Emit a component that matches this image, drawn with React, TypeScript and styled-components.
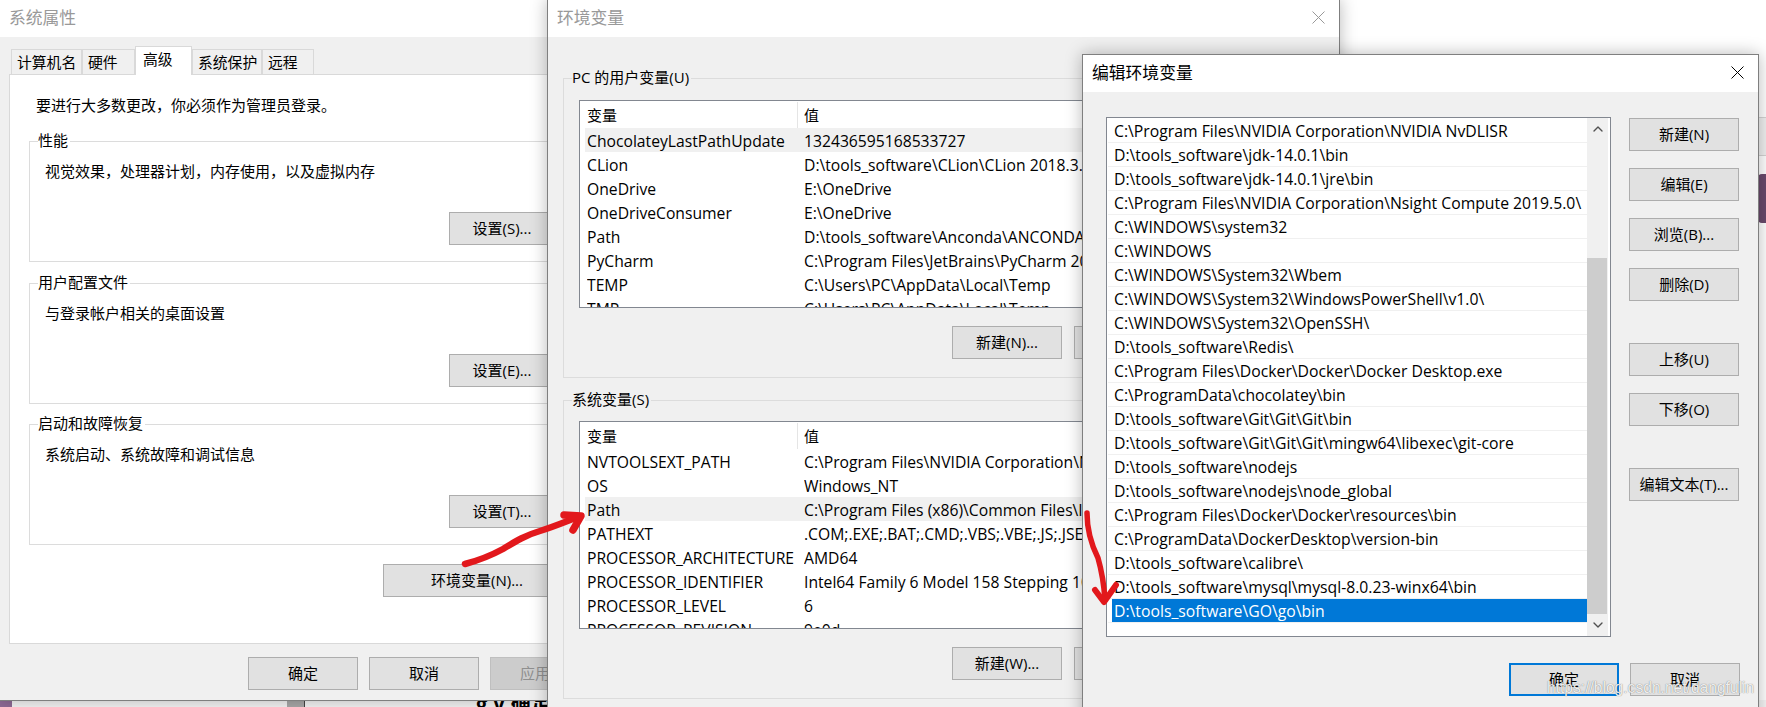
import React from "react";
import styled, { createGlobalStyle } from "styled-components";
import { ChevronDown, ChevronUp } from "lucide-react";

const GlobalStyle = createGlobalStyle`
  html, body {
    margin: 0;
    padding: 0;
    background: #fff;
  }
  * {
    box-sizing: border-box;
  }
`;

const Desktop = styled.div`
  position: relative;
  width: 1766px;
  height: 707px;
  overflow: hidden;
  background: #fff;
  color: #000;
  font-family: "Open Sans", "Noto Sans CJK SC", sans-serif;
  font-size: 15px;
  line-height: 20px;
`;

const Backdrop = styled.div`
  height: 100%;
  display: grid;
  grid-template-rows: 117px 39px 18px 49px 1fr 7px;
`;

const BackdropBand = styled.div`
  background: #f0f0f0;
  border-top: 1px solid #d4d4d4;
  border-bottom: 1px solid #d4d4d4;
`;

const BackdropTab = styled.div`
  grid-row: 4;
  justify-self: end;
  width: 8px;
  background: #694a6c;
  border-radius: 4px 0 0 4px;
`;

const BackdropFooter = styled.div`
  grid-row: 6;
  display: flex;
  overflow: hidden;
  background: #f6f6f6;
`;

const FooterLogo = styled.div`
  width: 12px;
  background: #8f6a96;
`;

const FooterThumb = styled.div`
  width: 17px;
  margin-left: 275px;
  background: #a9a9a9;
  border-right: 1px solid #444;
  box-sizing: content-box;
`;

const FooterText = styled.div`
  margin: -8px 0 0 171px;
  font-size: 20px;
  font-weight: 700;
  line-height: 24px;
  white-space: nowrap;
`;

const Window = styled.section<{ $left: number; $top: number; $width: number; $height: number }>`
  position: absolute;
  left: ${({ $left }) => $left}px;
  top: ${({ $top }) => $top}px;
  width: ${({ $width }) => $width}px;
  height: ${({ $height }) => $height}px;
  overflow: hidden;
  background: #f0f0f0;
  border: 1px solid #7f7f7f;
  box-shadow: 0 0 16px rgba(0, 0, 0, 0.28);
`;

const RootWindow = styled(Window)`
  border-width: 0 0 1px;
`;

const TitleBar = styled.header<{ $active?: boolean }>`
  display: flex;
  align-items: center;
  justify-content: space-between;
  height: 37px;
  padding: 0 14px 2px 9px;
  background: #fff;
  color: ${({ $active }) => ($active ? "#000" : "#999")};
  font-size: 16.8px;
`;

const CloseIcon = styled.svg`
  display: block;
  width: 13px;
  height: 13px;
`;

const TabStrip = styled.div`
  display: flex;
  align-items: flex-end;
  height: 37px;
  padding-left: 11px;
`;

const Tab = styled.div<{ $width: number; $active?: boolean }>`
  position: relative;
  z-index: ${({ $active }) => ($active ? 1 : 0)};
  width: ${({ $width }) => $width}px;
  height: ${({ $active }) => ($active ? 29 : 26)}px;
  margin-bottom: -1px;
  padding: ${({ $active }) => ($active ? "2px 0 0 7px" : "2px 0 0 5px")};
  background: ${({ $active }) => ($active ? "#fff" : "#f0f0f0")};
  border: 1px solid #d9d9d9;
  border-bottom-width: ${({ $active }) => ($active ? 0 : 1)}px;
  font-size: 14.8px;
`;

const TabPanel = styled.div`
  height: 570px;
  margin-left: 9px;
  padding: 20px 0 0 19px;
  background: #fff;
  border: 1px solid #d9d9d9;
`;

const Intro = styled.p`
  margin: 0 0 26px 7px;
`;

const Group = styled.div<{ $gap?: number }>`
  margin-top: ${({ $gap }) => $gap ?? 0}px;
  border: 1px solid #dcdcdc;
`;

const SettingsGroup = styled(Group)`
  width: 547px;
  padding: 0 20px 16px 15px;
`;

const Legend = styled.div<{ $bg: string }>`
  width: fit-content;
  height: 20px;
  margin: -11px 0 0 -7px;
  padding: 0 2px 0 0;
  background: ${({ $bg }) => $bg};
  line-height: 18px;
`;

const Description = styled.p`
  margin: 10px 0 31px;
`;

const ActionRow = styled.div<{ $top?: number }>`
  display: flex;
  justify-content: flex-end;
  margin-top: ${({ $top }) => $top ?? 0}px;
`;

const EnvActionRow = styled(ActionRow)`
  width: 542px;
`;

const Button = styled.button<{ $width?: number; $top?: number; $disabled?: boolean; $primary?: boolean }>`
  flex: none;
  width: ${({ $width }) => $width ?? 110}px;
  height: 33px;
  margin: ${({ $top }) => $top ?? 0}px 0 0;
  padding: 0 0 2px;
  background: ${({ $disabled }) => ($disabled ? "#cccccc" : "#e1e1e1")};
  border: ${({ $primary }) => ($primary ? "2px solid #0078d7" : "1px solid #adadad")};
  border-color: ${({ $disabled, $primary }) => ($primary ? "#0078d7" : $disabled ? "#bfbfbf" : "#adadad")};
  border-radius: 0;
  color: ${({ $disabled }) => ($disabled ? "#8f8f8f" : "#000")};
  font: inherit;
  text-align: center;
`;

const DialogFooter = styled.div`
  display: flex;
  gap: 11px;
  margin: 13px 0 0 248px;
`;

const EnvBody = styled.div`
  padding: 41px 0 0 15px;
`;

const EnvGroup = styled(Group)`
  width: 757px;
  padding: 0 15px 18px 15px;
`;

const VariableList = styled.div<{ $top: number }>`
  height: 208px;
  margin-top: ${({ $top }) => $top}px;
  overflow: hidden;
  background: #fff;
  border: 1px solid #828790;
  font-size: 15.7px;
`;

const VariableRow = styled.div<{ $selected?: boolean; $header?: boolean }>`
  display: grid;
  grid-template-columns: 217px 1fr;
  height: ${({ $header }) => ($header ? 27 : 24)}px;
  margin-left: 5px;
  padding: ${({ $header }) => ($header ? "0" : "2px")} 0 0 2px;
  align-items: center;
  background: ${({ $selected }) => ($selected ? "#f0f0f0" : "transparent")};
  white-space: nowrap;
`;

const HeaderCell = styled.div`
  position: relative;
  height: 100%;
  display: flex;
  align-items: center;
  font-size: 15px;
  & + &::before {
    content: "";
    position: absolute;
    left: -7px;
    top: 1px;
    bottom: 0;
    width: 1px;
    background: #e5e5e5;
  }
`;

const Cell = styled.div`
  overflow: hidden;
`;

const EnvActions = styled(ActionRow)`
  gap: 12px;
  justify-content: flex-start;
  margin: 18px 0 0 373px;
`;

const EditorBody = styled.div`
  display: flex;
  gap: 18px;
  padding: 25px 18px 0 23px;
`;

const PathList = styled.div`
  display: flex;
  width: 505px;
  height: 520px;
  flex: none;
  background: #fff;
  border: 1px solid #828790;
  font-size: 15.75px;
`;

const PathRows = styled.div`
  width: 480px;
  padding: 1px 0 0 1px;
  flex: none;
`;

const PathRow = styled.div`
  height: 24px;
  padding-left: 4px;
  border-bottom: 1px solid #f0f0f0;
  white-space: nowrap;
`;

const PathText = styled.div<{ $selected?: boolean }>`
  height: 23px;
  padding-left: 2px;
  line-height: 24px;
  background: ${({ $selected }) => ($selected ? "#0078d7" : "transparent")};
  color: ${({ $selected }) => ($selected ? "#fff" : "#000")};
`;

const ScrollBar = styled.div`
  display: flex;
  flex-direction: column;
  width: 21px;
  background: #f0f0f0;
`;

const ScrollArrow = styled.div`
  display: flex;
  align-items: center;
  justify-content: center;
  height: 22px;
  color: #505050;
`;

const ScrollTrack = styled.div`
  flex: none;
  height: 118px;
`;

const ScrollThumb = styled.div`
  height: 357px;
  width: 20px;
  background: #cdcdcd;
`;

const ButtonColumn = styled.div`
  display: flex;
  flex-direction: column;
  padding-top: 1px;
`;

const EditorFooter = styled.div`
  display: flex;
  justify-content: flex-end;
  gap: 11px;
  padding: 26px 18px 0 0;
`;

const Annotations = styled.svg`
  position: absolute;
  inset: 0;
  pointer-events: none;
`;

const Watermark = styled.div`
  position: absolute;
  left: 1547px;
  top: 678px;
  color: rgba(255, 255, 255, 0.9);
  font-family: "Liberation Sans", sans-serif;
  font-size: 15.6px;
  text-shadow: 0 0 1px rgba(60, 60, 60, 0.8);
  white-space: nowrap;
`;

const userVariables: [string, string][] = [
  ["ChocolateyLastPathUpdate", "132436595168533727"],
  ["CLion", "D:\\tools_software\\CLion\\CLion 2018.3.4\\bin;"],
  ["OneDrive", "E:\\OneDrive"],
  ["OneDriveConsumer", "E:\\OneDrive"],
  ["Path", "D:\\tools_software\\Anconda\\ANCONDA;D:\\tools_software"],
  ["PyCharm", "C:\\Program Files\\JetBrains\\PyCharm 2019.3\\bin;"],
  ["TEMP", "C:\\Users\\PC\\AppData\\Local\\Temp"],
  ["TMP", "C:\\Users\\PC\\AppData\\Local\\Temp"],
];

const systemVariables: [string, string][] = [
  ["NVTOOLSEXT_PATH", "C:\\Program Files\\NVIDIA Corporation\\NVIDIA"],
  ["OS", "Windows_NT"],
  ["Path", "C:\\Program Files (x86)\\Common Files\\Intel\\Shared"],
  ["PATHEXT", ".COM;.EXE;.BAT;.CMD;.VBS;.VBE;.JS;.JSE;.WSF;.WSH"],
  ["PROCESSOR_ARCHITECTURE", "AMD64"],
  ["PROCESSOR_IDENTIFIER", "Intel64 Family 6 Model 158 Stepping 10, GenuineIntel"],
  ["PROCESSOR_LEVEL", "6"],
  ["PROCESSOR_REVISION", "9e0d"],
];

const paths = [
  "C:\\Program Files\\NVIDIA Corporation\\NVIDIA NvDLISR",
  "D:\\tools_software\\jdk-14.0.1\\bin",
  "D:\\tools_software\\jdk-14.0.1\\jre\\bin",
  "C:\\Program Files\\NVIDIA Corporation\\Nsight Compute 2019.5.0\\",
  "C:\\WINDOWS\\system32",
  "C:\\WINDOWS",
  "C:\\WINDOWS\\System32\\Wbem",
  "C:\\WINDOWS\\System32\\WindowsPowerShell\\v1.0\\",
  "C:\\WINDOWS\\System32\\OpenSSH\\",
  "D:\\tools_software\\Redis\\",
  "C:\\Program Files\\Docker\\Docker\\Docker Desktop.exe",
  "C:\\ProgramData\\chocolatey\\bin",
  "D:\\tools_software\\Git\\Git\\Git\\bin",
  "D:\\tools_software\\Git\\Git\\Git\\mingw64\\libexec\\git-core",
  "D:\\tools_software\\nodejs",
  "D:\\tools_software\\nodejs\\node_global",
  "C:\\Program Files\\Docker\\Docker\\resources\\bin",
  "C:\\ProgramData\\DockerDesktop\\version-bin",
  "D:\\tools_software\\calibre\\",
  "D:\\tools_software\\mysql\\mysql-8.0.23-winx64\\bin",
  "D:\\tools_software\\GO\\go\\bin",
];

const settings = [
  { title: "性能", text: "视觉效果，处理器计划，内存使用，以及虚拟内存", action: "设置(S)...", gap: 0 },
  { title: "用户配置文件", text: "与登录帐户相关的桌面设置", action: "设置(E)...", gap: 21 },
  { title: "启动和故障恢复", text: "系统启动、系统故障和调试信息", action: "设置(T)...", gap: 20 },
];

const tabs = [
  { label: "计算机名", width: 71 },
  { label: "硬件", width: 53 },
  { label: "高级", width: 57, active: true },
  { label: "系统保护", width: 70 },
  { label: "远程", width: 52 },
];

const Close: React.FC<{ color: string }> = ({ color }) => (
  <CloseIcon viewBox="0 0 13 13">
    <path d="M0.5 0.5 12.5 12.5M12.5 0.5 0.5 12.5" stroke={color} strokeWidth="1" fill="none" />
  </CloseIcon>
);

const VariableTable: React.FC<{ rows: [string, string][]; selected: number; top: number }> = ({ rows, selected, top }) => (
  <VariableList $top={top}>
    <VariableRow $header>
      <HeaderCell>变量</HeaderCell>
      <HeaderCell>值</HeaderCell>
    </VariableRow>
    {rows.map(([name, value], index) => (
      <VariableRow key={name} $selected={index === selected}>
        <Cell>{name}</Cell>
        <Cell>{value}</Cell>
      </VariableRow>
    ))}
  </VariableList>
);

const App: React.FC = () => {
  return (
    <Desktop>
      <GlobalStyle />
      <Backdrop>
        <div />
        <BackdropBand />
        <div />
        <BackdropTab />
        <div />
        <BackdropFooter>
          <FooterLogo />
          <FooterThumb />
          <FooterText>g V 确定系</FooterText>
        </BackdropFooter>
      </Backdrop>

      <RootWindow $left={0} $top={0} $width={600} $height={701}>
        <TitleBar>系统属性</TitleBar>
        <TabStrip>
          {tabs.map((tab) => (
            <Tab key={tab.label} $width={tab.width} $active={tab.active}>
              {tab.label}
            </Tab>
          ))}
        </TabStrip>
        <TabPanel>
          <Intro>要进行大多数更改，你必须作为管理员登录。</Intro>
          {settings.map((item) => (
            <SettingsGroup key={item.title} $gap={item.gap}>
              <Legend $bg="#fff">{item.title}</Legend>
              <Description>{item.text}</Description>
              <ActionRow>
                <Button $width={106}>{item.action}</Button>
              </ActionRow>
            </SettingsGroup>
          ))}
          <EnvActionRow $top={19}>
            <Button $width={188}>环境变量(N)...</Button>
          </EnvActionRow>
        </TabPanel>
        <DialogFooter>
          <Button>确定</Button>
          <Button>取消</Button>
          <Button $disabled $width={90}>应用</Button>
        </DialogFooter>
      </RootWindow>

      <Window $left={547} $top={-1} $width={793} $height={720}>
        <TitleBar>
          环境变量
          <Close color="#999" />
        </TitleBar>
        <EnvBody>
          <EnvGroup>
            <Legend $bg="#f0f0f0">PC 的用户变量(U)</Legend>
            <VariableTable rows={userVariables} selected={0} top={12} />
            <EnvActions>
              <Button>新建(N)...</Button>
              <Button>编辑(E)...</Button>
            </EnvActions>
          </EnvGroup>
          <EnvGroup $gap={22}>
            <Legend $bg="#f0f0f0">系统变量(S)</Legend>
            <VariableTable rows={systemVariables} selected={2} top={11} />
            <EnvActions>
              <Button>新建(W)...</Button>
              <Button>编辑(I)...</Button>
            </EnvActions>
          </EnvGroup>
        </EnvBody>
      </Window>

      <Window $left={1082} $top={54} $width={677} $height={680}>
        <TitleBar $active>
          编辑环境变量
          <Close color="#000" />
        </TitleBar>
        <EditorBody>
          <PathList>
            <PathRows>
              {paths.map((path, index) => (
                <PathRow key={path}>
                  <PathText $selected={index === paths.length - 1}>{path}</PathText>
                </PathRow>
              ))}
            </PathRows>
            <ScrollBar>
              <ScrollArrow>
                <ChevronUp size={16} strokeWidth={2} />
              </ScrollArrow>
              <ScrollTrack />
              <ScrollThumb />
              <ScrollArrow>
                <ChevronDown size={16} strokeWidth={2} />
              </ScrollArrow>
            </ScrollBar>
          </PathList>
          <ButtonColumn>
            <Button>新建(N)</Button>
            <Button $top={17}>编辑(E)</Button>
            <Button $top={17}>浏览(B)...</Button>
            <Button $top={17}>删除(D)</Button>
            <Button $top={42}>上移(U)</Button>
            <Button $top={17}>下移(O)</Button>
            <Button $top={42}>编辑文本(T)...</Button>
          </ButtonColumn>
        </EditorBody>
        <EditorFooter>
          <Button $primary>确定</Button>
          <Button>取消</Button>
        </EditorFooter>
      </Window>

      <Annotations width="1766" height="707" viewBox="0 0 1766 707">
        <g fill="none" stroke="#e2181c" strokeLinecap="round" strokeLinejoin="round">
          <path d="M465 564C480 560 492 555 503 549C516 541 526 535 540 531C553 527 565 522 578 517" strokeWidth="6.5" />
          <path d="M564 515 581 516 573 530" strokeWidth="7.5" />
          <path d="M1087 513C1087 530 1092 546 1098 558C1102 572 1104 585 1105 600" strokeWidth="5.5" />
          <path d="M1095 590 1104 602 1116 585" strokeWidth="6" />
        </g>
      </Annotations>
      <Watermark>https://blog.csdn.net/dangfulin</Watermark>
    </Desktop>
  );
};

export default App;
